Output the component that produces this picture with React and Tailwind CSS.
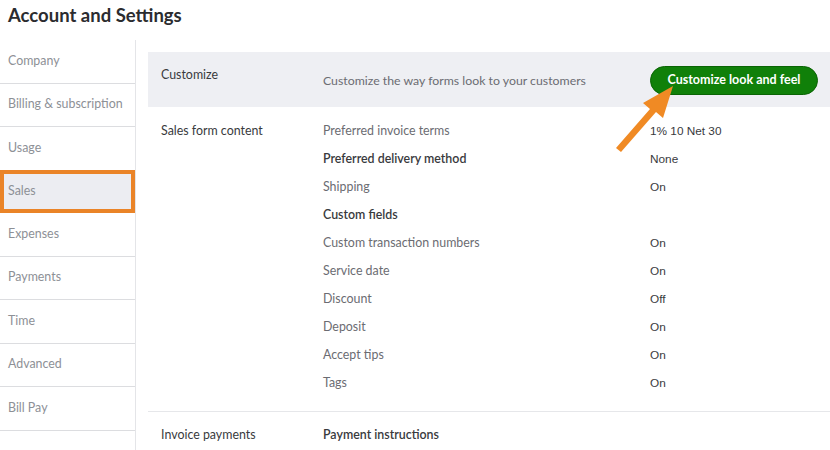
import React from "react";

const nav = ["Company", "Billing & subscription", "Usage", "Sales", "Expenses", "Payments", "Time", "Advanced", "Bill Pay"];

const rows = [
  { label: "Preferred invoice terms", value: "1% 10 Net 30" },
  { label: "Preferred delivery method", value: "None", bold: true },
  { label: "Shipping", value: "On" },
  { label: "Custom fields", value: "", bold: true },
  { label: "Custom transaction numbers", value: "On" },
  { label: "Service date", value: "On" },
  { label: "Discount", value: "Off" },
  { label: "Deposit", value: "On" },
  { label: "Accept tips", value: "On" },
  { label: "Tags", value: "On" },
];

export default function App() {
  return (
    <div className="relative w-[830px] h-[450px] overflow-hidden bg-white text-[#393a3d]" style={{ fontFamily: "Lato, 'Open Sans', sans-serif" }}>
      <div className="h-[40px] pl-[8px] pt-[3px]">
        <h1 className="text-[18.5px] font-bold text-[#2b2c2f] leading-[24px]">Account and Settings</h1>
      </div>
      <div className="flex">
        <div className="w-[136px] shrink-0 border-r border-[#e4e5e8] h-[410px]">
          {nav.map((n) =>
            n === "Sales" ? (
              <div key={n} className="h-[43.5px] -mt-px border-[4px] border-[#ea8428] bg-[#ecedf2] flex items-center pl-[4px] text-[12.4px] text-[#8d9096]">
                {n}
              </div>
            ) : (
              <div key={n} className="h-[43.5px] border-b border-[#dcdde0] flex items-center pl-[8px] text-[12.4px] text-[#8d9096]">
                {n}
              </div>
            )
          )}
        </div>
        <div className="flex-1 pl-[12px] pt-[12px]">
          <div className="h-[55px] bg-[#eeeff3] flex">
            <div className="w-[175px] shrink-0 pl-[13px] pt-[14px] text-[12.4px]">Customize</div>
            <div className="w-[327px] shrink-0 pt-[20px] text-[12.3px] text-[#6b6c72]">Customize the way forms look to your customers</div>
            <div className="pt-[14px]">
              <div className="h-[29px] w-[168px] rounded-full bg-[#108009] border border-[#0a6404] flex items-center justify-center text-white font-bold text-[12.5px]">
                Customize look and feel
              </div>
            </div>
          </div>
          <div className="flex pt-[15px] h-[305px] border-b border-[#e6e7ea]">
            <div className="w-[175px] shrink-0 pl-[13px] text-[12.4px] leading-[18px]">Sales form content</div>
            <div className="flex-1">
              {rows.map((r) => (
                <div key={r.label} className="flex h-[28px]">
                  <div className={"w-[327px] shrink-0 text-[12.4px] leading-[18px] " + (r.bold ? "font-semibold text-[#393a3d]" : "text-[#6b6c72]")}>{r.label}</div>
                  <div className="text-[11.8px] leading-[18px] text-[#393a3d]" style={{ fontFamily: "'Liberation Sans', Arial, sans-serif" }}>{r.value}</div>
                </div>
              ))}
            </div>
          </div>
          <div className="flex pt-[14px]">
            <div className="w-[175px] shrink-0 pl-[13px] text-[12.4px] leading-[18px]">Invoice payments</div>
            <div className="text-[12.4px] leading-[18px] font-semibold">Payment instructions</div>
          </div>
        </div>
      </div>
      <svg className="absolute left-0 top-0 pointer-events-none" width="830" height="450">
        <path d="M616 148 L650 109 L643 103 L673 86 L663 118 L656 112 L621 152 Z" fill="#f08a24" />
      </svg>
    </div>
  );
}
